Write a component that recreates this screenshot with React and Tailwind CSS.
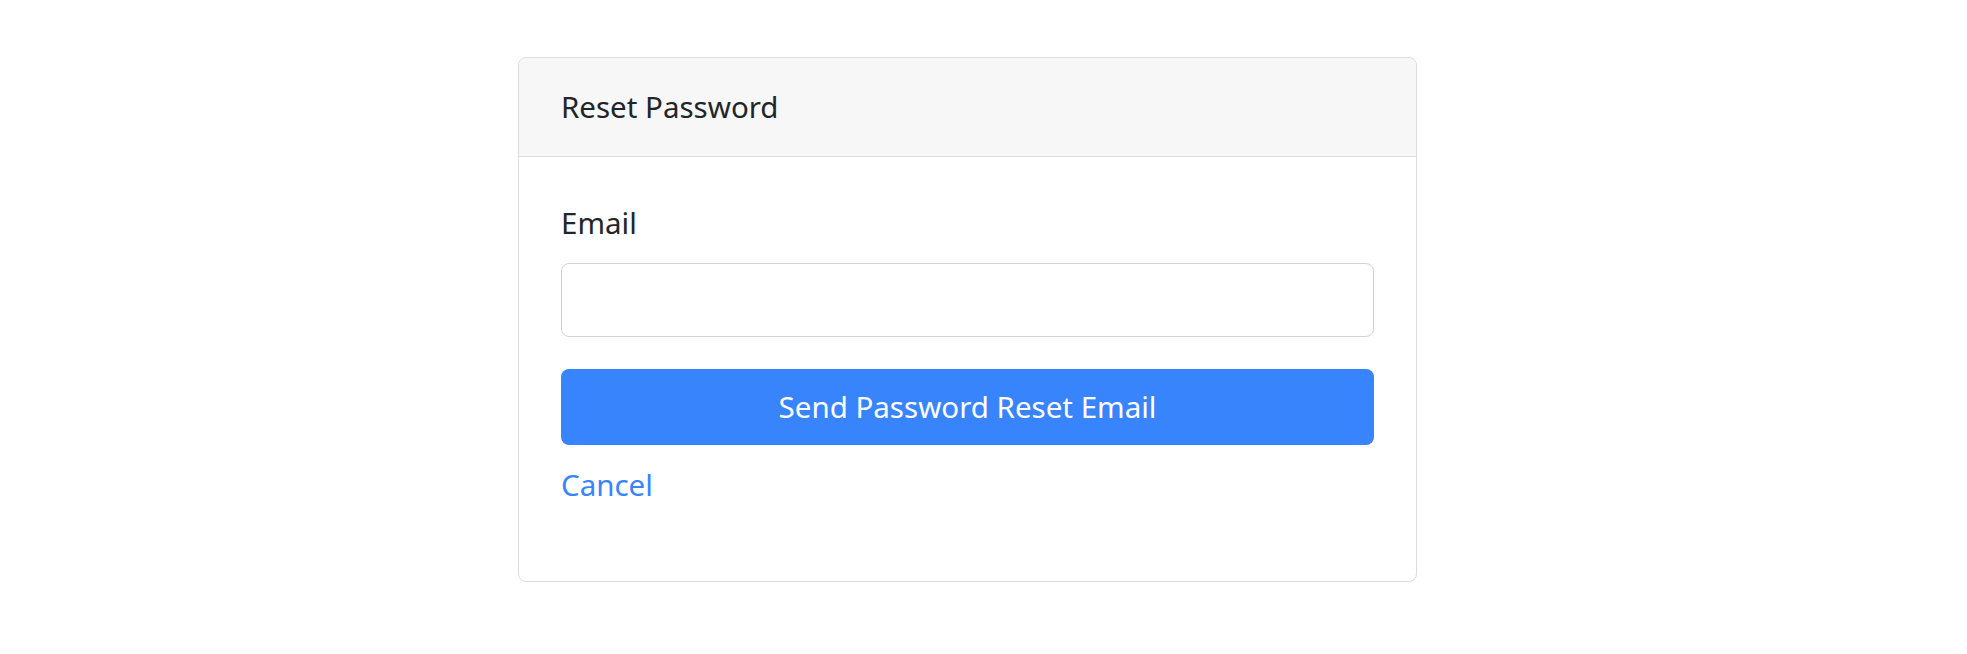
export default function App() {
  return (
    <div className="min-h-screen bg-white pt-[57px] font-['Noto_Sans',_'Open_Sans',_sans-serif] text-[#212529]">
      <div className="ml-[518px] w-[899px] rounded-[8px] border border-[#dcdcdc] bg-white">
        <div className="rounded-t-[8px] border-b border-[#dcdcdc] bg-[#f7f7f7] px-[42px] py-[25px] text-[29.5px] leading-[48px]">
          Reset Password
        </div>
        <div className="p-[42px] text-[29.5px] leading-[48px]">
          <div className="mb-[32px]">
            <label className="mb-[16px] block">Email</label>
            <input
              type="email"
              className="block h-[74px] w-full rounded-[8px] border border-[#ced4da] bg-white px-[24px] outline-none"
            />
          </div>
          <button className="block h-[76px] w-full rounded-[8px] bg-[#3884fd] text-white">
            Send Password Reset Email
          </button>
          <p className="mb-[30px] mt-[16px]">
            <a href="#" className="text-[#3884fd]">
              Cancel
            </a>
          </p>
        </div>
      </div>
    </div>
  );
}
